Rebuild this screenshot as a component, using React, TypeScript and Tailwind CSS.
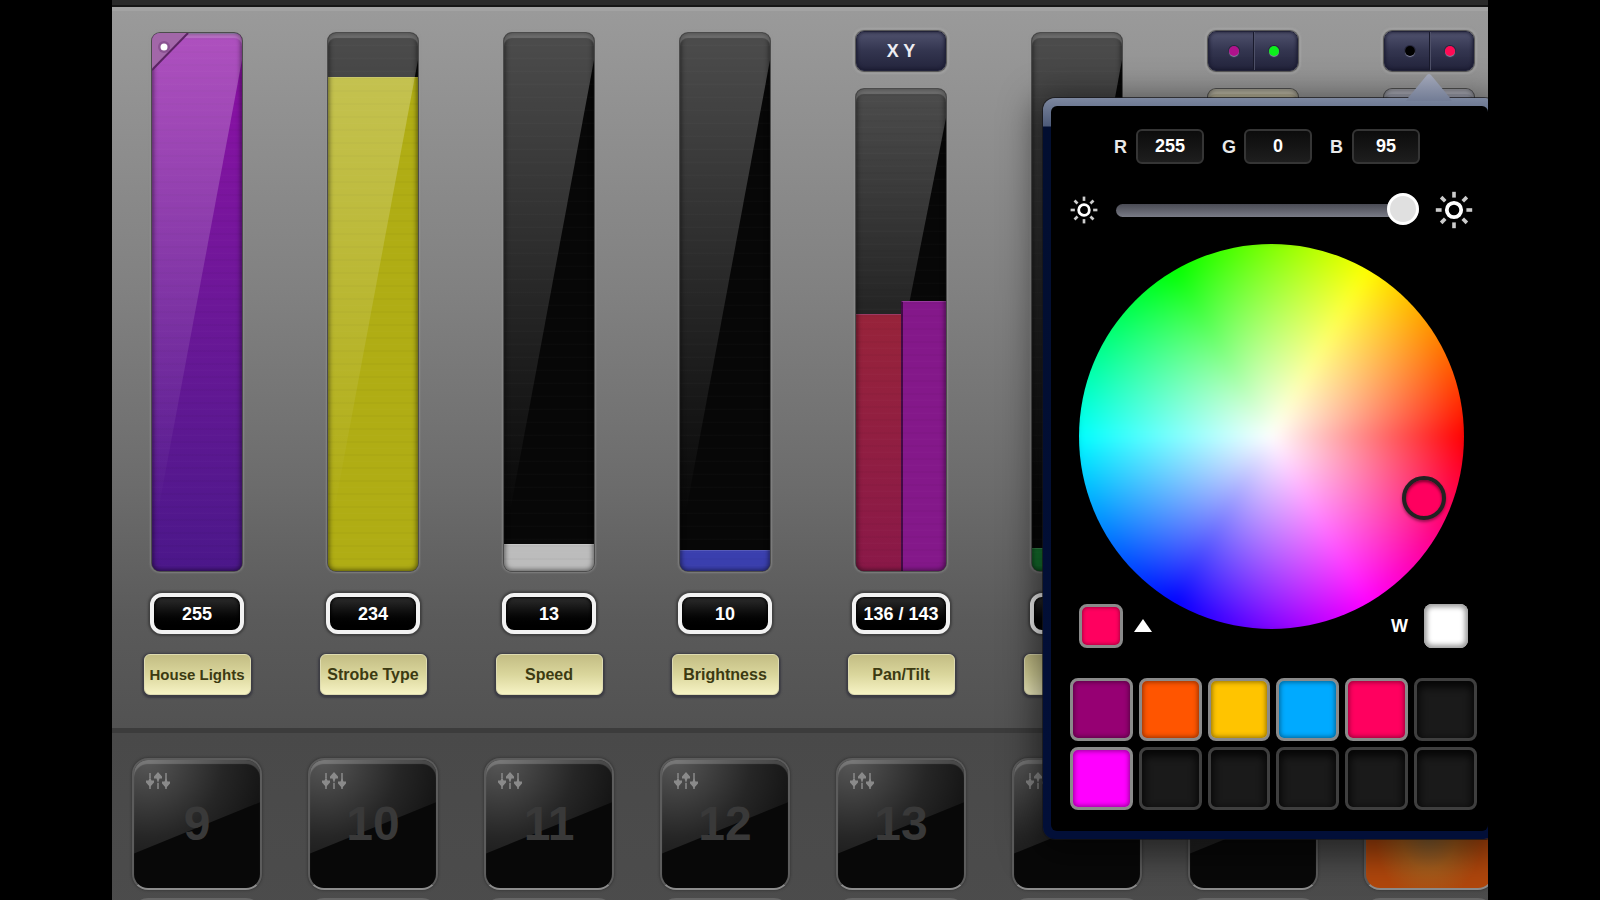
import { useState } from "react";
import clsx from "clsx";

const faders = [
  { name: "House Lights", values: [255], fills: ["bg-linear-to-b from-[#8f0da6] to-[#4b178a]"], corner: true },
  { name: "Strobe Type", values: [234], fills: ["bg-[#b0ad14]"] },
  { name: "Speed", values: [13], fills: ["bg-[#bcbcbc]"] },
  { name: "Brightness", values: [10], fills: ["bg-[#3a3fae]"] },
  { name: "Pan/Tilt", values: [136, 143], fills: ["bg-linear-to-b from-[#97233a] to-[#8a1848]", "bg-[#84188a]"], top: "xy" },
  { name: "", values: [11], fills: ["bg-[#15762f]"] },
  { name: "", values: [255], fills: ["bg-[#978f6c]"], top: "dots", dots: ["bg-[#b0128c]", "bg-[#0cf01c]"] },
  { name: "", values: [255], fills: ["bg-[#77798c]"], top: "dots", dots: ["bg-black", "bg-[#ff0a55]"] },
];

const pads = ["9", "10", "11", "12", "13", "", "", ""];

const palette = [
  "#960073", "#ff5500", "#ffc400", "#00aaff", "#ff005f", "",
  "#ff00ff", "", "", "", "", "",
];

function Sun({ className }) {
  return (
    <svg viewBox="0 0 38 38" className={className} fill="none" stroke="white" aria-hidden="true">
      <circle cx="19" cy="19" r="7.2" strokeWidth="3.8" />
      <g strokeWidth="3.6" strokeOpacity=".8">
        {[0, 45, 90, 135, 180, 225, 270, 315].map((a) => (
          <path key={a} d="M19 .8v5.8" transform={`rotate(${a} 19 19)`} />
        ))}
      </g>
    </svg>
  );
}

function PadIcon() {
  return (
    <svg viewBox="0 0 24 18" className="absolute top-3 left-3 h-[18px] w-6" fill="#8a8a8a" aria-hidden="true">
      <path d="M3 1h2v5H3zM3 14h2v3H3zM11 11h2v6h-2zM19 1h2v7h-2zM19 15h2v2h-2z" fillOpacity=".75" />
      <path d="M4 5l1.500 3.500H8v2L4 15 0 10.500v-2h2.500zM12 0l4 4.500v2h-2.500L12 11l-1.500-4.500H8v-2zM20 6l1.500 3.500H24v2L20 16l-4-4.500v-2h2.500z" />
    </svg>
  );
}

function TopButton({ fader }) {
  const look =
    "h-10 w-[90px] shrink-0 rounded-lg border border-[#22233a] bg-linear-to-b from-[#50526e] via-[#33354f] to-[#23243c] shadow-[0_0_1px_1px_rgba(60,60,60,0.8),0_0_2px_3px_rgba(170,170,170,0.6),inset_0_0_3px_1px_rgba(20,20,40,0.6)]";
  if (fader.top === "xy") {
    return <button className={clsx(look, "text-lg leading-5 font-bold text-[#ececf2]")}>X Y</button>;
  }
  return (
    <div className={clsx(look, "flex overflow-hidden")}>
      {fader.dots.map((dot, i) => (
        <button
          key={dot}
          aria-label={`Color ${i + 1}`}
          className={clsx("flex flex-1 items-center justify-center", i === 0 ? "border-r border-[#191a2c] pl-1.5" : "border-l border-[#4e5068] pr-1")}
        >
          <span className={clsx("size-2.5 rounded-full shadow-[0_1px_1px_#8a8ca6,0_0_0_1px_#25263c]", dot)} />
        </button>
      ))}
    </div>
  );
}

function Fader({ fader, index }) {
  const [values, setValues] = useState(fader.values);
  const split = values.length > 1;

  const change = (i, v) => setValues(values.map((old, n) => (n === i ? v : old)));

  return (
    <div className="flex w-[132px] shrink-0 flex-col items-center">
      <div className="flex h-[540px] flex-col gap-[18px]">
        {fader.top && <TopButton fader={fader} />}
        <div
          className={clsx(
            "relative flex w-[90px] flex-1 overflow-hidden rounded-lg bg-[#070707] shadow-[0_0_0_1px_#4c4c4c,0_0_2px_2px_rgba(150,150,150,0.6)]",
            !fader.top && "mt-0.5"
          )}
        >
          {split && (
            <div className="pointer-events-none absolute inset-0 bg-linear-to-b from-white/28 to-transparent to-80% [clip-path:polygon(0_0,100%_0,100%_6%,0_100%)]" />
          )}
          {values.map((value, i) => (
            <div key={i} className="relative flex h-full flex-1 items-end">
              <div
                className={clsx("w-full border-t border-t-white/15", i > 0 && "border-l-2 border-l-black/50", fader.fills[i])}
                style={{ height: `${(value / 255) * 100}%` }}
              />
              <input
                type="range"
                min="0"
                max="255"
                value={value}
                aria-label={`${fader.name || `Channel ${index + 1}`} level`}
                onChange={(e) => change(i, Number(e.target.value))}
                className="absolute inset-0 h-full w-full cursor-pointer opacity-0 [writing-mode:vertical-lr] [direction:rtl]"
              />
            </div>
          ))}
          {/* brushed texture, glass reflection and rim */}
          <div className="pointer-events-none absolute inset-0 bg-[repeating-linear-gradient(transparent_0,transparent_5px,rgba(0,0,0,0.05)_6px,transparent_7px,transparent_11px,rgba(255,255,255,0.02)_13px)]" />
          {!split && (
            <div className="pointer-events-none absolute inset-0 bg-linear-to-b from-white/28 to-transparent to-90% [clip-path:polygon(0_0,100%_0,100%_5%,0_95%)]" />
          )}
          <div className="pointer-events-none absolute inset-0 rounded-lg shadow-[inset_0_5px_1px_rgba(255,255,255,0.2),inset_0_0_5px_1px_rgba(0,0,0,0.55)]" />
          {fader.corner && (
            <svg viewBox="0 0 38 38" className="pointer-events-none absolute top-0 left-0 size-[38px]" aria-hidden="true">
              <path d="M0 0H36L0 37z" fill="#a267a8" />
              <path d="M36 0L0 37" stroke="#5b2463" strokeWidth="2" />
              <circle cx="12" cy="14" r="6" fill="#8b5392" />
              <circle cx="12" cy="14" r="3.5" fill="white" />
            </svg>
          )}
        </div>
      </div>
      <output
        className={clsx(
          "mt-[22px] flex h-[41px] items-center justify-center rounded-xl border-4 border-[#f2f2f2] bg-linear-to-b from-[#2e2e2e] to-black text-lg leading-5 font-bold whitespace-nowrap text-white shadow-[0_0_2px_2px_rgba(40,40,40,0.5),inset_0_0_3px_1px_black]",
          split ? "w-[98px]" : "w-[94px]"
        )}
      >
        {index < 5 && values.join(" / ")}
      </output>
      <div
        className={clsx(
          "mt-5 flex h-[41px] w-[107px] items-center justify-center rounded-md border border-[#dedbb0] bg-linear-to-b from-[#c3bd84] via-[#dad69c] to-[#f6f3c4] leading-5 font-bold whitespace-nowrap text-[#3c3a12] shadow-[0_1px_2px_2px_rgba(50,50,60,0.7)]",
          fader.name.length > 11 ? "text-[15px]" : "text-base"
        )}
      >
        {fader.name}
      </div>
    </div>
  );
}

function ColorPopover() {
  const [color, setColor] = useState("#ff005f");
  const rgb = [1, 3, 5].map((i) => parseInt(color.slice(i, i + 2), 16));

  return (
    <div className="absolute top-[98px] -right-2 w-[453px] rounded-xl bg-[linear-gradient(#7c879f_0,#4d5a78_28px,#020e30_29px,#020f38_100%)] p-2 shadow-[0_0_0_1px_rgba(20,20,25,0.7),0_8px_34px_8px_rgba(0,0,0,0.5)]">
      <svg viewBox="0 0 46 28" className="absolute -top-[25px] left-[363px] h-7 w-[46px]" aria-hidden="true">
        <defs>
          <linearGradient id="arrow" x1="0" y1="0" x2="0" y2="1">
            <stop offset="0" stopColor="#a2a7b8" />
            <stop offset="1" stopColor="#727c95" />
          </linearGradient>
        </defs>
        <path d="M0 28L2 25 21 2q2-2 4 0L44 25l2 3z" fill="url(#arrow)" />
      </svg>
      <div className="rounded-md bg-black pt-[23px] pb-[21px]">
        <div className="flex gap-[18px] pl-[63px]">
          {["R", "G", "B"].map((c, i) => (
            <label key={c} className="flex items-center text-lg leading-5 font-bold text-[#e8e8e8]">
              <span className="w-[22px]">{c}</span>
              <input
                readOnly
                value={rgb[i]}
                className="h-[35px] w-[68px] rounded-md border-2 border-[#353535] bg-linear-to-b from-[#0c0c0c] to-[#1e1e1e] text-center text-white outline-none"
              />
            </label>
          ))}
        </div>

        <div className="mt-[26px] flex h-10 items-center pr-[15px] pl-[19px]">
          <Sun className="size-7" />
          <input
            type="range"
            aria-label="Brightness"
            defaultValue="100"
            className="mr-4 ml-[18px] h-8 min-w-0 flex-1 appearance-none bg-transparent [&::-webkit-slider-runnable-track]:h-[13px] [&::-webkit-slider-runnable-track]:rounded-full [&::-webkit-slider-runnable-track]:bg-linear-to-b [&::-webkit-slider-runnable-track]:from-[#4a4b54] [&::-webkit-slider-runnable-track]:to-[#797b86] [&::-webkit-slider-thumb]:-mt-[11px] [&::-webkit-slider-thumb]:size-8 [&::-webkit-slider-thumb]:appearance-none [&::-webkit-slider-thumb]:rounded-full [&::-webkit-slider-thumb]:border-3 [&::-webkit-slider-thumb]:border-white [&::-webkit-slider-thumb]:bg-[#e0e0e0]"
          />
          <Sun className="size-[38px]" />
        </div>

        <div role="img" aria-label="Color wheel" className="relative mt-[14px] ml-7 size-[385px]">
          <div className="size-full overflow-hidden rounded-full">
            <div className="size-full scale-105 bg-[radial-gradient(closest-side,white,rgba(255,255,255,0)_95%),conic-gradient(from_90deg,#f00,#f0f,#00f,#0ff,#0f0,#ff0,#f00)] blur-[6px]" />
          </div>
          <span
            className="absolute top-[232px] left-[323px] size-11 rounded-full border-4 border-[#222] shadow-[inset_0_2px_3px_rgba(0,0,0,0.5),0_2px_3px_rgba(0,0,0,0.4)]"
            style={{ backgroundColor: color }}
          />
        </div>

        <div className="relative -mt-[26px] mr-5 ml-7 flex h-[45px] items-center">
          <button
            aria-label="Current color"
            className="size-11 rounded-lg border-3 border-[#8a8a8a] shadow-[inset_0_0_4px_rgba(0,0,0,0.5)]"
            style={{ backgroundColor: color }}
          />
          <svg viewBox="0 0 18 13" className="ml-[11px] h-[13px] w-[18px]" fill="white" aria-hidden="true">
            <path d="M9 0L18 13H0z" />
          </svg>
          <label htmlFor="white" className="ml-auto text-lg leading-5 font-bold text-white">W</label>
          <button id="white" className="ml-4 size-11 rounded-lg bg-white shadow-[inset_0_0_5px_3px_#9b9b9b]" />
        </div>

        <div className="mt-[30px] ml-[19px] grid w-[407px] grid-cols-6 gap-1.5">
          {palette.map((c, i) => (
            <button
              key={i}
              aria-label={c || "Empty"}
              onClick={() => c && setColor(c)}
              className={clsx(
                "h-[63px] rounded-lg border-3",
                c
                  ? "border-[#8a8a8a] shadow-[inset_0_0_5px_1px_rgba(0,0,0,0.45)]"
                  : "border-[#3f3f3f] bg-[#1a1a1a] shadow-[inset_0_4px_8px_2px_rgba(0,0,0,0.8)]"
              )}
              style={c ? { backgroundColor: c } : undefined}
            />
          ))}
        </div>
      </div>
    </div>
  );
}

export default function App() {
  return (
    <main className="h-screen overflow-hidden bg-black px-[7%] font-['Liberation_Sans',Arial,sans-serif]">
      <div className="relative flex h-full flex-col overflow-hidden bg-[#4a4a4a]">
        <div className="h-[7px] shrink-0 border-b-2 border-[#151515] bg-[#2a2a2a]" />

        <section className="flex h-[721px] shrink-0 gap-11 border-t-4 border-[#a3a3a3] bg-[linear-gradient(#9a9a9a_0%,#808080_40%,#6c6c6c_66%,#5a5a5a_85%,#525252_100%)] pt-5 pl-[19px]">
          {faders.map((fader, i) => (
            <Fader key={i} fader={fader} index={i} />
          ))}
        </section>

        <section className="flex flex-1 flex-col gap-2 border-t-5 border-[#3c3c3c] bg-linear-to-b from-[#494949] to-[#4c4c4c] pt-[25px] pl-5">
          <div className="flex gap-[46px]">
            {pads.map((n, i) => (
              <button
                key={i}
                aria-label={`Pad ${i + 9}`}
                className={clsx(
                  "relative h-[132px] w-[130px] shrink-0 overflow-hidden rounded-2xl border-2 border-[#5c5c5c] border-b-[#8c8c8c] text-5xl leading-12 font-bold text-[#393939] shadow-[0_0_2px_1px_rgba(50,50,50,0.6),inset_0_4px_1px_rgba(255,255,255,0.2)]",
                  i === 7
                    ? "bg-[radial-gradient(ellipse_at_50%_60%,#8a6233_0%,#a85e1c_30%,#b1470c_60%)]"
                    : "bg-[#080808]"
                )}
              >
                {i !== 7 && (
                  <span className="absolute inset-0 bg-[radial-gradient(circle_at_10%_0%,rgba(255,255,255,0.32),rgba(255,255,255,0.12)_45%,rgba(255,255,255,0.04)_75%)] [clip-path:polygon(0_0,100%_0,100%_33%,0_73%)]" />
                )}
                <span className="relative">{n}</span>
                <PadIcon />
              </button>
            ))}
          </div>
          <div className="flex gap-[46px]" aria-hidden="true">
            {pads.map((_, i) => (
              <div key={i} className="h-8 w-[130px] shrink-0 rounded-t-2xl border-t-2 border-[#666] bg-[#3a3a3a]" />
            ))}
          </div>
        </section>

        <ColorPopover />
      </div>
    </main>
  );
}
